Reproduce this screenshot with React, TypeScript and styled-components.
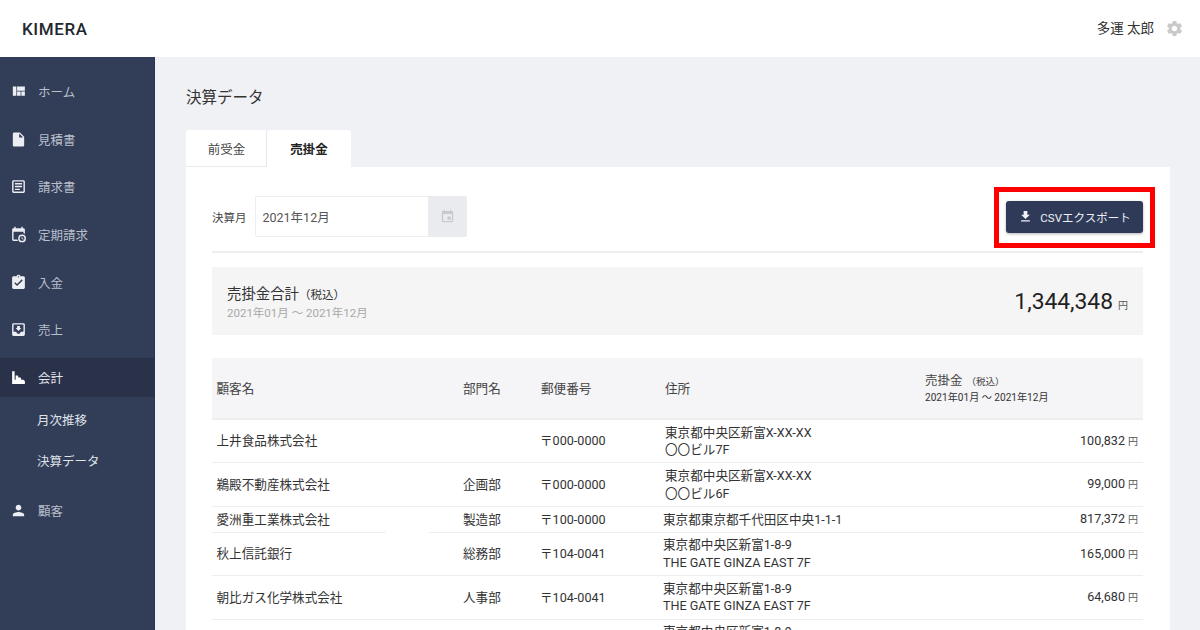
import React from 'react';
import styled, { createGlobalStyle } from 'styled-components';

const GlobalStyle = createGlobalStyle`
  html, body {
    margin: 0;
    padding: 0;
    height: 630px;
    overflow: hidden;
    background: #f0f1f5;
    font-family: Roboto, 'Noto Sans CJK JP', sans-serif;
    color: #333;
  }
  * {
    box-sizing: border-box;
  }
`;

const paths = {
  home: 'M10 18h5v-6h-5v6zm-6 0h5V5H4v13zm12 0h5v-6h-5v6zM10 5v6h11V5H10z',
  quote: 'M6 2c-1.1 0-1.99.9-1.99 2L4 20c0 1.1.89 2 1.99 2H18c1.1 0 2-.9 2-2V8l-6-6H6zm7 7V3.5L18.5 9H13z',
  invoice: 'M19 5v14H5V5h14m0-2H5c-1.1 0-2 .9-2 2v14c0 1.1.9 2 2 2h14c1.1 0 2-.9 2-2V5c0-1.1-.9-2-2-2zM14 17H7v-2h7v2zm3-4H7v-2h10v2zm0-4H7V7h10v2z',
  recurring: 'M16 1v2H8V1H6v2H5c-1.1 0-2 .9-2 2v14c0 1.1.9 2 2 2h6.3a6.5 6.5 0 0 1-.9-2H5V8h14v2.4c.7.2 1.4.5 2 .9V5c0-1.1-.9-2-2-2h-1V1h-2zM17 12a5.5 5.5 0 1 0 0 11 5.5 5.5 0 0 0 0-11zm0 2a3.5 3.5 0 1 1 0 7 3.5 3.5 0 0 1 0-7zm-.6 1v3l2.4 1.3.5-.8-1.9-1.1V15h-1z',
  payment: 'M19 3h-4.18C14.4 1.84 13.3 1 12 1c-1.3 0-2.4.84-2.82 2H5c-1.1 0-2 .9-2 2v14c0 1.1.9 2 2 2h14c1.1 0 2-.9 2-2V5c0-1.1-.9-2-2-2zm-7 0c.55 0 1 .45 1 1s-.45 1-1 1-1-.45-1-1 .45-1 1-1zm-2 14l-4-4 1.41-1.41L10 14.17l6.59-6.59L18 9l-8 8z',
  sales: 'M19 3H4.99c-1.11 0-1.98.89-1.98 2L3 19c0 1.1.88 2 1.99 2H19c1.1 0 2-.9 2-2V5c0-1.11-.9-2-2-2zm0 12h-4c0 1.66-1.35 3-3 3s-3-1.34-3-3H4.99V5H19v10zm-3-5h-2V7h-4v3H8l4 4 4-4z',
  accounting: 'M3 3h3.5v12H8V9h3l1 3h3l1 3h3l2 2v4H3V3z',
  person: 'M12 12c2.21 0 4-1.79 4-4s-1.79-4-4-4-4 1.79-4 4 1.79 4 4 4zm0 2c-2.67 0-8 1.34-8 4v2h16v-2c0-2.66-5.33-4-8-4z',
  settings: 'M19.14 12.94c.04-.3.06-.61.06-.94 0-.32-.02-.64-.07-.94l2.03-1.58c.18-.14.23-.41.12-.61l-1.92-3.32c-.12-.22-.37-.29-.59-.22l-2.39.96c-.5-.38-1.03-.7-1.62-.94l-.36-2.54c-.04-.24-.24-.41-.48-.41h-3.84c-.24 0-.43.17-.47.41l-.36 2.54c-.59.24-1.13.57-1.62.94l-2.39-.96c-.22-.08-.47 0-.59.22L2.74 8.87c-.12.21-.08.47.12.61l2.03 1.58c-.05.3-.09.63-.09.94s.02.64.07.94l-2.03 1.58c-.18.14-.23.41-.12.61l1.92 3.32c.12.22.37.29.59.22l2.39-.96c.5.38 1.03.7 1.62.94l.36 2.54c.05.24.24.41.48.41h3.84c.24 0 .44-.17.47-.41l.36-2.54c.59-.24 1.13-.56 1.62-.94l2.39.96c.22.08.47 0 .59-.22l1.92-3.32c.12-.22.07-.47-.12-.61l-2.01-1.58zM12 15.6c-1.98 0-3.6-1.62-3.6-3.6s1.62-3.6 3.6-3.6 3.6 1.62 3.6 3.6-1.62 3.6-3.6 3.6z',
  download: 'M19 9h-4V3H9v6H5l7 7 7-7zM5 18v2h14v-2H5z',
  calendar: 'M17 12h-5v5h5v-5zM16 1v2H8V1H6v2H5c-1.11 0-1.99.9-1.99 2L3 19c0 1.1.89 2 2 2h14c1.1 0 2-.9 2-2V5c0-1.1-.9-2-2-2h-1V1h-2zm3 18H5V8h14v11z',
};

type IconName = keyof typeof paths;

const Icon = ({ name, size = 16 }: { name: IconName; size?: number }) => (
  <svg width={size} height={size} viewBox="0 0 24 24" fill="currentColor" fillRule="evenodd">
    <path d={paths[name]} />
  </svg>
);

const navItems: { icon: IconName; label: string }[] = [
  { icon: 'home', label: 'ホーム' },
  { icon: 'quote', label: '見積書' },
  { icon: 'invoice', label: '請求書' },
  { icon: 'recurring', label: '定期請求' },
  { icon: 'payment', label: '入金' },
  { icon: 'sales', label: '売上' },
];

const rows = [
  { name: '上井食品株式会社', dept: '', zip: '〒000-0000', addr: ['東京都中央区新富X-XX-XX', '〇〇ビル7F'], amount: '100,832', inset: true },
  { name: '鵜殿不動産株式会社', dept: '企画部', zip: '〒000-0000', addr: ['東京都中央区新富X-XX-XX', '〇〇ビル6F'], amount: '99,000', inset: true },
  { name: '愛洲重工業株式会社', dept: '製造部', zip: '〒100-0000', addr: ['東京都東京都千代田区中央1-1-1'], amount: '817,372', broken: true },
  { name: '秋上信託銀行', dept: '総務部', zip: '〒104-0041', addr: ['東京都中央区新富1-8-9', 'THE GATE GINZA EAST 7F'], amount: '165,000' },
  { name: '朝比ガス化学株式会社', dept: '人事部', zip: '〒104-0041', addr: ['東京都中央区新富1-8-9', 'THE GATE GINZA EAST 7F'], amount: '64,680' },
  { name: '', dept: '', zip: '', addr: ['東京都中央区新富1-8-9'], amount: '' },
];

export default function App() {
  return (
    <>
      <GlobalStyle />
      <Page>
        <Header>
          <Logo>KIMERA</Logo>
          <UserBox>
            <UserName>多運 太郎</UserName>
            <Gear>
              <Icon name="settings" size={19} />
            </Gear>
          </UserBox>
        </Header>
        <Body>
          <Sidebar>
            {navItems.map((item) => (
              <NavItem key={item.label}>
                <NavIcon>
                  <Icon name={item.icon} size={17} />
                </NavIcon>
                {item.label}
              </NavItem>
            ))}
            <NavItem $active>
              <NavIcon $bright>
                <Icon name="accounting" size={17} />
              </NavIcon>
              会計
            </NavItem>
            <SubNav>
              <SubItem>月次推移</SubItem>
              <SubItem>決算データ</SubItem>
            </SubNav>
            <NavItem>
              <NavIcon>
                <Icon name="person" size={17} />
              </NavIcon>
              顧客
            </NavItem>
          </Sidebar>
          <Main>
            <Title>決算データ</Title>
            <Tabs>
              <Tab>前受金</Tab>
              <Tab $active>売掛金</Tab>
            </Tabs>
            <Card>
              <Toolbar>
                <MonthField>
                  <FieldLabel>決算月</FieldLabel>
                  <FieldInput>2021年12月</FieldInput>
                  <FieldButton>
                    <Icon name="calendar" size={15} />
                  </FieldButton>
                </MonthField>
                <ExportFrame>
                  <ExportButton>
                    <Icon name="download" size={15} />
                    CSVエクスポート
                  </ExportButton>
                </ExportFrame>
              </Toolbar>
              <Summary>
                <div>
                  <SummaryTitle>
                    売掛金合計<small>（税込）</small>
                  </SummaryTitle>
                  <SummaryPeriod>2021年01月 ～ 2021年12月</SummaryPeriod>
                </div>
                <SummaryAmount>
                  1,344,348<Yen>円</Yen>
                </SummaryAmount>
              </Summary>
              <Table>
                <HeadRow>
                  <NameCell>顧客名</NameCell>
                  <div>部門名</div>
                  <div>郵便番号</div>
                  <AddrCell $inset>住所</AddrCell>
                  <HeadAmountCell>
                    <HeadAmount>
                      売掛金<small>（税込）</small>
                    </HeadAmount>
                    <HeadPeriod>2021年01月 ～ 2021年12月</HeadPeriod>
                  </HeadAmountCell>
                </HeadRow>
                {rows.map((r, i) => (
                  <Row key={i} $broken={r.broken} $single={r.addr.length === 1}>
                    <NameCell>{r.name}</NameCell>
                    <div>{r.dept}</div>
                    <ZipCell>{r.zip}</ZipCell>
                    <AddrCell $inset={r.inset}>
                      {r.addr.map((line) => (
                        <div key={line}>{line}</div>
                      ))}
                    </AddrCell>
                    <AmountCell>
                      {r.amount}
                      {r.amount && <Yen $small>円</Yen>}
                    </AmountCell>
                  </Row>
                ))}
              </Table>
            </Card>
          </Main>
        </Body>
      </Page>
    </>
  );
}

const columns = '251px 78px 120px 264px 218px';

const Page = styled.div`
  width: 1200px;
  height: 630px;
  overflow: hidden;
  display: flex;
  flex-direction: column;
`;

const Header = styled.header`
  flex: none;
  height: 57px;
  background: #fff;
  display: flex;
  align-items: center;
  justify-content: space-between;
  padding: 0 16px 0 22px;
`;

const Logo = styled.div`
  font-family: Roboto, sans-serif;
  font-size: 17px;
  font-weight: 500;
  letter-spacing: 0.6px;
  color: #23272e;
`;

const UserBox = styled.div`
  display: flex;
  align-items: center;
  gap: 11px;
`;

const UserName = styled.span`
  font-size: 13.5px;
  color: #333;
  margin-bottom: 3px;
`;

const Gear = styled.span`
  display: flex;
  color: #c9c9c9;
`;

const Body = styled.div`
  flex: 1;
  display: flex;
  min-height: 0;
`;

const Sidebar = styled.nav`
  flex: none;
  width: 155px;
  background: #323d57;
  border-right: 1px solid #2b3550;
  padding-top: 15.3px;
`;

const NavItem = styled.div<{ $active?: boolean }>`
  height: 39px;
  margin-bottom: ${(p) => (p.$active ? '0' : '8.6px')};
  display: flex;
  align-items: center;
  gap: 11px;
  padding-left: 10px;
  font-size: 12.5px;
  color: ${(p) => (p.$active ? '#e6e8ee' : '#b9bfcc')};
  background: ${(p) => (p.$active ? '#2a324a' : 'transparent')};
`;

const NavIcon = styled.span<{ $bright?: boolean }>`
  display: flex;
  color: ${(p) => (p.$bright ? '#fff' : '#eceef3')};
`;

const SubNav = styled.div`
  display: flex;
  flex-direction: column;
  padding: 2px 0 10px 37px;
`;

const SubItem = styled.div`
  height: 41px;
  display: flex;
  align-items: center;
  font-size: 12.5px;
  color: #dfe2e9;
`;

const Main = styled.main`
  flex: 1;
  min-width: 0;
  padding: 30px 30px 0 31px;
`;

const Title = styled.h1`
  margin: 0 0 21px;
  font-size: 15.5px;
  line-height: 22px;
  font-weight: 400;
  color: #333;
`;

const Tabs = styled.div`
  display: flex;
`;

const Tab = styled.div<{ $active?: boolean }>`
  width: ${(p) => (p.$active ? '84px' : '81px')};
  height: 37px;
  display: flex;
  align-items: center;
  justify-content: center;
  font-size: 12.5px;
  font-weight: ${(p) => (p.$active ? 700 : 400)};
  color: ${(p) => (p.$active ? '#222' : '#444')};
  background: #fff;
  border-radius: 3px 3px 0 0;
  box-shadow: ${(p) => (p.$active ? 'none' : 'inset -1px -1px 0 #e9eaee')};
`;

const Card = styled.section`
  background: #fff;
  padding: 29px 27px 0 26px;
  height: 500px;
`;

const Toolbar = styled.div`
  display: flex;
  align-items: center;
  justify-content: space-between;
  height: 57px;
  padding-bottom: 14px;
  border-bottom: 2px solid #eeeef0;
  margin-bottom: 14px;
`;

const MonthField = styled.div`
  display: flex;
  align-items: center;
`;

const FieldLabel = styled.span`
  font-size: 11.5px;
  color: #444;
  margin-right: 8px;
`;

const FieldInput = styled.div`
  width: 173px;
  height: 41px;
  display: flex;
  align-items: center;
  padding-left: 7px;
  font-size: 12.5px;
  color: #555;
  border: 1px solid #edeef1;
  border-right: 0;
  border-radius: 2px 0 0 2px;
`;

const FieldButton = styled.div`
  width: 39px;
  height: 41px;
  display: flex;
  align-items: center;
  justify-content: center;
  background: #e9ebee;
  color: #c7c9cc;
  border-radius: 0 2px 2px 0;
`;

const ExportFrame = styled.div`
  position: relative;
  &::before {
    content: '';
    position: absolute;
    left: -12px;
    right: -12px;
    top: -14px;
    bottom: -15px;
    border: 5px solid #f00;
  }
`;

const ExportButton = styled.button`
  width: 137px;
  height: 32px;
  display: flex;
  align-items: center;
  justify-content: center;
  gap: 7px;
  padding: 0;
  border: 0;
  border-radius: 3px;
  background: #2f3a58;
  box-shadow: 0 1px 3px rgba(0, 0, 0, 0.3);
  color: #eef0f4;
  font-family: inherit;
  font-size: 11.5px;
`;

const Summary = styled.div`
  height: 68px;
  display: flex;
  align-items: center;
  justify-content: space-between;
  padding: 3px 15px 0;
  margin-bottom: 23px;
  background: #f5f5f6;
`;

const SummaryTitle = styled.div`
  font-size: 14.4px;
  line-height: 20px;
  color: #333;
  small {
    font-size: 11.5px;
  }
`;

const SummaryPeriod = styled.div`
  font-size: 11.5px;
  line-height: 16px;
  color: #a8a8a8;
`;

const SummaryAmount = styled.div`
  font-size: 22.8px;
  color: #222;
  margin-top: -2px;
`;

const Yen = styled.span<{ $small?: boolean }>`
  font-size: 10px;
  margin-left: ${(p) => (p.$small ? '3px' : '5px')};
  color: #555;
`;

const Table = styled.div`
  font-size: 12.6px;
  color: #333;
`;

const HeadRow = styled.div`
  display: grid;
  grid-template-columns: ${columns};
  align-items: center;
  height: 62px;
  padding-bottom: 2px;
  background: #f5f4f6;
  border-bottom: 2px solid #eeeef1;
  color: #444;
`;

const HeadAmountCell = styled.div`
  margin-top: 4px;
`;

const HeadAmount = styled.div`
  font-size: 12.5px;
  line-height: 16px;
  small {
    font-size: 9.5px;
    margin-left: 4px;
  }
`;

const HeadPeriod = styled.div`
  font-size: 10.1px;
  line-height: 14px;
  margin-top: 1px;
  color: #333;
  white-space: nowrap;
`;

const Row = styled.div<{ $broken?: boolean; $single?: boolean }>`
  position: relative;
  display: grid;
  grid-template-columns: ${columns};
  align-items: center;
  height: ${(p) => (p.$single ? '26px' : '43.4px')};
  border-bottom: 1px solid #eeeef2;
  line-height: 17.5px;

  ${(p) =>
    p.$broken &&
    `&::after {
      content: '';
      position: absolute;
      left: 174px;
      bottom: -1px;
      width: 43px;
      height: 1px;
      background: #fff;
    }`}
`;

const NameCell = styled.div`
  padding-left: 4.5px;
`;

const ZipCell = styled.div`
  margin-left: -1px;
`;

const AddrCell = styled.div<{ $inset?: boolean }>`
  padding-left: ${(p) => (p.$inset ? '4px' : '2px')};
  white-space: nowrap;
`;

const AmountCell = styled.div`
  text-align: right;
  padding-right: 5px;
  white-space: nowrap;
`;
